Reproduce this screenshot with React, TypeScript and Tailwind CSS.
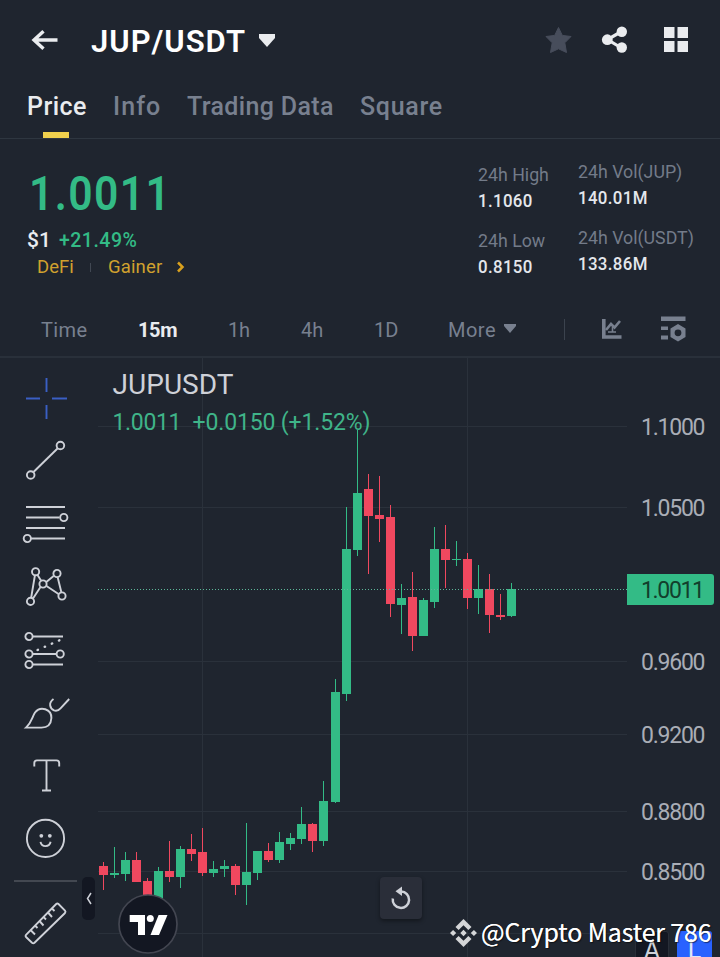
import { ReactNode } from "react"

type Candle = {
  up: boolean
  high: number
  top: number
  bottom: number
  low: number
}

const c = (
  dir: string,
  high: number,
  top: number,
  bottom: number,
  low: number,
): Candle => ({ up: dir === "u", high, top, bottom, low })

const candles: Candle[] = [
  c("d", 862, 866, 875, 890),
  c("u", 847, 873, 875, 878),
  c("u", 852, 860, 874, 881),
  c("d", 852, 860, 882, 882),
  c("d", 878, 881, 898, 898),
  c("u", 867, 871, 899, 899),
  c("d", 841, 871, 877, 882),
  c("u", 846, 849, 877, 888),
  c("d", 834, 849, 854, 861),
  c("d", 828, 852, 873, 876),
  c("u", 861, 869, 873, 877),
  c("u", 860, 866, 869, 877),
  c("d", 864, 866, 885, 895),
  c("u", 823, 872, 885, 905),
  c("u", 851, 851, 873, 880),
  c("d", 843, 851, 860, 862),
  c("u", 832, 842, 860, 863),
  c("u", 833, 838, 844, 850),
  c("u", 807, 824, 839, 844),
  c("d", 823, 824, 841, 852),
  c("u", 781, 801, 841, 846),
  c("u", 679, 692, 802, 803),
  c("u", 507, 549, 694, 701),
  c("u", 430, 493, 550, 556),
  c("d", 474, 489, 516, 574),
  c("d", 476, 515, 519, 542),
  c("d", 505, 517, 604, 617),
  c("u", 584, 598, 605, 634),
  c("d", 572, 597, 636, 651),
  c("u", 598, 600, 636, 636),
  c("u", 527, 549, 602, 608),
  c("d", 525, 549, 560, 588),
  c("u", 541, 559, 560, 566),
  c("d", 553, 559, 598, 609),
  c("u", 565, 589, 598, 614),
  c("d", 574, 589, 615, 633),
  c("d", 594, 615, 617, 620),
  c("u", 583, 589, 616, 617),
]

const priceLevels = [
  { y: 426.5, label: "1.1000" },
  { y: 507.5, label: "1.0500" },
  { y: 661, label: "0.9600" },
  { y: 734.5, label: "0.9200" },
  { y: 811, label: "0.8800" },
  { y: 871, label: "0.8500" },
  { y: 933, label: "" },
]

const Header = () => {
  return (
    <header className="flex h-20 items-center pl-[31px] pr-[31px]">
      <svg
        className="mb-[1px]"
        width="28"
        height="22"
        viewBox="0 0 28 22"
        fill="none"
      >
        <path
          d="M26.5 11H4M12.5 2.2L3 11L12.5 19.8"
          stroke="#eaecef"
          strokeWidth="3.4"
        />
      </svg>
      <h1 className="ml-[32px] mt-[2px] w-[154px] whitespace-nowrap text-[31px] font-semibold leading-none tracking-[1px] text-white">
        JUP/USDT
      </h1>
      <svg className="ml-[14px]" width="16" height="13" viewBox="0 0 16 13">
        <path d="M0 0H16V4L8 13L0 4Z" fill="#eaecef" />
      </svg>
      <div className="mb-px ml-auto flex items-center">
        <svg width="27" height="28" viewBox="0 0 27 28">
          <path
            d="M13.5 1.5L17.3 9.4L26 10.5L19.8 16.8L21.5 26.5L13.5 22.8L5.5 26.5L7.2 16.8L1 10.5L9.7 9.4Z"
            fill="#474d5b"
            stroke="#474d5b"
            strokeLinejoin="round"
          />
        </svg>
        <svg
          className="ml-[29px]"
          width="28"
          height="28"
          viewBox="0 0 28 28"
          fill="#eaecef"
        >
          <path
            d="M20.5 5.5L6.5 13.5L20.5 22"
            stroke="#eaecef"
            strokeWidth="3.2"
            fill="none"
          />
          <circle cx="20.8" cy="5.7" r="5.2" />
          <circle cx="6.3" cy="13.7" r="5.4" />
          <circle cx="20.8" cy="21.5" r="5.2" />
        </svg>
        <svg
          className="ml-[35px]"
          width="25"
          height="25"
          viewBox="0 0 25 25"
          fill="#eaecef"
        >
          <path d="M0 0H10.5V11H0ZM13.5 0H24V11H13.5ZM0 14H10.5V25H0ZM13.5 14H24V25H13.5Z" />
        </svg>
      </div>
    </header>
  )
}

const Tabs = () => {
  return (
    <nav className="flex h-[59px] border-b border-[#2e3640] pl-[27px] pt-[12px] text-[25px] font-medium leading-[29px] text-[#78808f]">
      <div className="flex w-[86px] flex-col">
        <span className="w-[60px] whitespace-nowrap tracking-[0.45px] text-[#eaecef]">
          Price
        </span>
        <span className="ml-[16px] mt-[11px] h-[6px] w-[26px] shrink-0 bg-[#f0d04d]" />
      </div>
      <span className="w-[74px] whitespace-nowrap tracking-[1.1px]">Info</span>
      <span className="w-[173px] whitespace-nowrap tracking-[0.35px]">
        Trading Data
      </span>
      <span className="whitespace-nowrap tracking-[0.7px]">Square</span>
    </nav>
  )
}

const Stat = ({ label, value }: { label: string; value: string }) => {
  return (
    <div className="h-[66px] whitespace-nowrap text-[18.5px] leading-[26px]">
      <div className="origin-left scale-x-[0.96] text-[#737b89]">{label}</div>
      <div className="origin-left scale-x-[0.91] font-medium tracking-[0.4px] text-[#e4e7ec]">
        {value}
      </div>
    </div>
  )
}

const Summary = () => {
  return (
    <section className="flex h-[165px]">
      <div className="flex w-[478px] flex-col pl-[27px] pt-[29px]">
        <div className="ml-[2px] origin-left scale-x-[0.87] whitespace-nowrap text-[49px] font-semibold leading-[52px] tracking-[1.6px] text-[#33bb86]">
          1.0011
        </div>
        <div className="mt-[7px] flex whitespace-nowrap text-[21px] font-medium leading-[27px]">
          <span className="w-[32px] text-[#eaecef]">$1</span>
          <span className="origin-left scale-x-[0.93] tracking-[0.5px] text-[#33bb86]">
            +21.49%
          </span>
        </div>
        <div className="flex items-center pl-[10px] text-[18.5px] leading-[27px] text-[#d0a12e]">
          <span className="w-[53px]">DeFi</span>
          <span className="h-[9px] w-px bg-[#414853]" />
          <span className="ml-[17px] w-[69px] whitespace-nowrap tracking-[0.15px]">
            Gainer
          </span>
          <svg
            className="mb-px"
            width="8"
            height="12"
            viewBox="0 0 8 12"
            fill="none"
          >
            <path d="M1 1.5L5.5 6L1 10.5" stroke="#d9a11e" strokeWidth="2.5" />
          </svg>
        </div>
      </div>
      <div className="w-[100px] pt-[23px]">
        <Stat label="24h High" value="1.1060" />
        <Stat label="24h Low" value="0.8150" />
      </div>
      <div className="pt-[20px]">
        <Stat label="24h Vol(JUP)" value="140.01M" />
        <Stat label="24h Vol(USDT)" value="133.86M" />
      </div>
    </section>
  )
}

const Intervals = () => {
  return (
    <nav className="flex h-[54px] items-center border-b-2 border-[#29303a] pl-[41px] text-[20px] text-[#78808f]">
      <span className="w-[97px] tracking-[0.4px]">Time</span>
      <span className="w-[90px] font-bold tracking-[-0.4px] text-[#eaecef]">
        15m
      </span>
      <span className="w-[73px] tracking-[-0.3px]">1h</span>
      <span className="w-[73px]">4h</span>
      <span className="w-[74px]">1D</span>
      <span className="w-[56px] tracking-[0.5px]">More</span>
      <svg className="mb-[3px]" width="12" height="9" viewBox="0 0 12 9">
        <path d="M0 0H12V2L6 9L0 2Z" fill="#78808f" />
      </svg>
      <span className="mb-[2px] ml-[48px] h-[21px] w-px bg-[#3b434e]" />
      <svg
        className="mb-[2px] ml-[37px]"
        width="20"
        height="20"
        viewBox="0 0 20 20"
        fill="none"
        stroke="#78808f"
      >
        <path d="M1.8 0V18H19.5" strokeWidth="3.6" />
        <path d="M4 11L9 5L12.5 8.5L18 2" strokeWidth="2.6" />
        <path d="M6 13H14M10.5 8V13" strokeWidth="1.6" />
      </svg>
      <svg
        className="mb-[2px] ml-[39px]"
        width="25"
        height="26"
        viewBox="0 0 25 26"
        fill="#78808f"
      >
        <path d="M0 0.5H24.5V5H0ZM0 10.5H7V14H0ZM0 19.5H7V23.5H0Z" />
        <path
          fillRule="evenodd"
          d="M17 8L24.5 12.5V21L17 25.5L9.5 21V12.5ZM17 13.4A3.4 3.4 0 1 0 17 20.2A3.4 3.4 0 1 0 17 13.4Z"
        />
      </svg>
    </nav>
  )
}

const Tool = ({ children, color }: { children: ReactNode; color?: string }) => {
  return (
    <button className="flex h-[63px] w-full shrink-0 items-center pl-[21px]">
      <svg
        width="49"
        height="48"
        viewBox="0 0 49 48"
        fill="none"
        stroke={color ?? "#ced1d8"}
        strokeWidth="1.9"
      >
        {children}
      </svg>
    </button>
  )
}

const Toolbar = () => {
  return (
    <aside className="flex w-[98px] shrink-0 flex-col pt-[8px]">
      <Tool color="#3a5fc4">
        <path d="M25.5 4V18M25.5 31V45M5 24.5H19M31 24.5H46" />
      </Tool>
      <Tool>
        <circle cx="9.7" cy="38" r="3.8" />
        <circle cx="39.4" cy="8.5" r="3.8" />
        <path d="M12.5 35L36.5 11.5" />
      </Tool>
      <Tool>
        <path d="M5 7H44M5 17.5H38.5M5 28H44M10 38.5H44" />
        <circle cx="42.8" cy="17.5" r="3.6" />
        <circle cx="6.3" cy="38.5" r="3.6" />
      </Tool>
      <Tool>
        <path d="M13.9 12.5L10.2 34.5M16.5 12L20 17.5M19.5 24L12 35.5M25.3 19L32.6 13M36.7 14.4L40.3 29M25.5 23L37.5 31" />
        <circle cx="14.6" cy="8.7" r="3.6" />
        <circle cx="36" cy="10.5" r="3.6" />
        <circle cx="22" cy="21" r="3.6" />
        <circle cx="41" cy="33" r="3.6" />
        <circle cx="9.5" cy="38.4" r="3.6" />
      </Tool>
      <Tool>
        <path d="M12 10.5H42M12 28H35M12 38.5H42" />
        <path
          d="M16.5 24L40 13.6"
          strokeWidth="2.4"
          strokeLinecap="round"
          strokeDasharray="0.5 7.3"
        />
        <circle cx="8" cy="10.5" r="3.6" />
        <circle cx="8" cy="28" r="3.6" />
        <circle cx="8" cy="38.5" r="3.6" />
        <circle cx="39.2" cy="28" r="3.6" />
      </Tool>
      <Tool>
        <path d="M5 38.6C11 33 11 28 14 23.5C19.5 16.5 30.5 20 30.4 29C30 35.5 26 38.6 20.5 38.6Z" />
        <path d="M32.5 10C27 14 29 19.5 33 21.4C36 22.6 38 21 39.5 19.3L48.2 10" />
      </Tool>
      <Tool>
        <path d="M13.3 14.5V11Q13.3 8.4 16 8.4H35.5Q38.2 8.4 38.2 11V14.5M25.5 8.4V38.5M21 38.5H30" />
      </Tool>
      <Tool>
        <circle cx="24.5" cy="23.4" r="18.6" />
        <circle cx="20.3" cy="20.8" r="1.9" fill="#ced1d8" stroke="none" />
        <circle cx="28.8" cy="20.8" r="1.9" fill="#ced1d8" stroke="none" />
        <path d="M19.5 26.8C20.5 32.5 28.5 32.5 29.6 26.8" />
      </Tool>
      <span className="ml-[14px] mt-[10px] h-[2px] w-[63px] shrink-0 bg-[#434851]" />
      <div className="mt-[9px] flex h-[63px] items-center overflow-hidden">
        <Tool>
          <path d="M5 35.8L35.2 5Q36.3 4 37.5 5L44 11.6Q45 12.8 44 14L13.5 43.8Q12.3 44.8 11 43.8L5 38Q4 37 5 35.8Z" />
          <path d="M9.5 31L14 35.5M14 26.5L16.5 29M18.5 22L22.5 26.5M22.5 18L25 20.5M27 13.5L31 18M31 9.5L33.5 12" />
        </Tool>
      </div>
    </aside>
  )
}

const Chart = () => {
  return (
    <svg
      className="block"
      width="622"
      height="599"
      viewBox="98 358 622 599"
      fontFamily="Roboto, sans-serif"
    >
      <g fill="#2a313b">
        <rect x="202" y="358" width="1" height="599" />
        <rect x="467" y="358" width="1" height="599" />
        {priceLevels.map(({ y }) => (
          <rect key={y} x="98" y={Math.floor(y)} width="529" height="1" />
        ))}
      </g>
      <g shapeRendering="crispEdges">
        {candles.map((candle, i) => {
          const x = Math.floor(99.45 + i * 11.027)
          return (
            <g key={i} fill={candle.up ? "#33bb86" : "#f0485f"}>
              <rect
                x={x + 4}
                y={candle.high}
                width="1"
                height={candle.low - candle.high}
              />
              <rect
                x={x}
                y={candle.top}
                width="9"
                height={candle.bottom - candle.top}
              />
            </g>
          )
        })}
      </g>
      <path
        d="M98 589.5H627"
        stroke="#5cb799"
        strokeWidth="1"
        strokeDasharray="1 2"
      />
      <g fontSize="23" fill="#a9adb6">
        {priceLevels
          .filter(({ label }) => label)
          .map(({ y, label }) => (
            <text key={y} x="641" y={y + 8.5} textLength="64.5">
              {label}
            </text>
          ))}
      </g>
      <path
        d="M627 574H711Q714 574 714 577V602Q714 605 711 605H627Z"
        fill="#33bb86"
      />
      <text x="641" y="597.5" fontSize="23" textLength="64" fill="#123f2c">
        1.0011
      </text>
      <text x="112.5" y="394" fontSize="28" textLength="121" fill="#ced1d8">
        JUPUSDT
      </text>
      <g fontSize="23" fill="#3fb489">
        <text x="112.5" y="430" textLength="69">
          1.0011
        </text>
        <text x="192.5" y="430" textLength="178">
          +0.0150 (+1.52%)
        </text>
      </g>
    </svg>
  )
}

const Watermark = () => {
  return (
    <div className="absolute left-[352px] top-[558px] flex h-[34px] items-center">
      <svg width="27" height="28" viewBox="0 0 27 28" fill="#d5d6d8">
        <path d="M13.5 0L21.5 8L18.4 11.1L13.5 6.2L8.6 11.1L5.5 8Z" />
        <path d="M13.5 28L21.5 20L18.4 16.9L13.5 21.8L8.6 16.9L5.5 20Z" />
        <path d="M13.5 10.8L16.7 14L13.5 17.2L10.3 14ZM3.1 10.9L6.2 14L3.1 17.1L0 14ZM23.9 10.9L27 14L23.9 17.1L20.8 14Z" />
      </svg>
      <span className="mb-[4px] ml-[4px] whitespace-nowrap font-['Noto_Sans_CJK_SC','Noto_Sans',sans-serif] text-[25px] leading-[34px] tracking-[-0.15px] text-white [text-shadow:1px_1px_1px_#0008,0_0_0.5px_#fff]">
        @Crypto Master 786
      </span>
    </div>
  )
}

const ScaleButtons = () => {
  return (
    <div className="absolute left-[537px] top-[573px] flex h-[26px] gap-[8px] overflow-hidden text-center text-[25px] leading-[38px]">
      <span className="h-[40px] w-[34px] rounded-[3px] border border-[#292e38] bg-[#131722] text-[#ced1d8]">
        A
      </span>
      <span className="h-[40px] w-[35px] rounded-[3px] bg-[#2962ff] text-[#dfe4f5]">
        L
      </span>
    </div>
  )
}

const App = () => {
  return (
    <div className="flex h-[957px] w-[720px] flex-col overflow-hidden bg-[#1f252f] font-[Roboto,sans-serif]">
      <Header />
      <Tabs />
      <Summary />
      <Intervals />
      <main className="flex h-[599px] overflow-hidden">
        <Toolbar />
        <div className="relative w-[622px] shrink-0">
          <Chart />
          <button className="absolute left-[-16px] top-[519px] flex h-[43px] w-[13px] items-center justify-center rounded-[5px] bg-[#131722]">
            <svg width="6" height="13" viewBox="0 0 6 13" fill="none">
              <path
                d="M5 1L1.5 6.5L5 12"
                stroke="#ced1d8"
                strokeWidth="1.5"
              />
            </svg>
          </button>
          <svg
            className="absolute left-[20px] top-[536px]"
            width="60"
            height="60"
            viewBox="118 894 60 60"
          >
            <circle
              cx="148"
              cy="924"
              r="29"
              fill="#131722"
              stroke="#434651"
              strokeWidth="1.7"
            />
            <g fill="#fff">
              <path d="M129.7 915H145V935H138V922H129.7Z" />
              <circle cx="150.3" cy="918.6" r="3.5" />
              <path d="M158.6 915H167.5L159 935H150.5Z" />
            </g>
          </svg>
          <button className="absolute left-[282px] top-[519px] flex h-[42px] w-[42px] items-center justify-center rounded-[4px] bg-[#2a2e39] shadow-[0_2px_4px_#0006]">
            <svg width="22" height="24" viewBox="0 0 22 24" fill="none">
              <path
                d="M2.8 12.5A8.2 8.2 0 1 0 11 5.5H9"
                stroke="#ced1d8"
                strokeWidth="2.5"
              />
              <path d="M12 0.5V10L5.5 5.3Z" fill="#ced1d8" />
            </svg>
          </button>
          <ScaleButtons />
          <Watermark />
        </div>
      </main>
    </div>
  )
}

export default App
